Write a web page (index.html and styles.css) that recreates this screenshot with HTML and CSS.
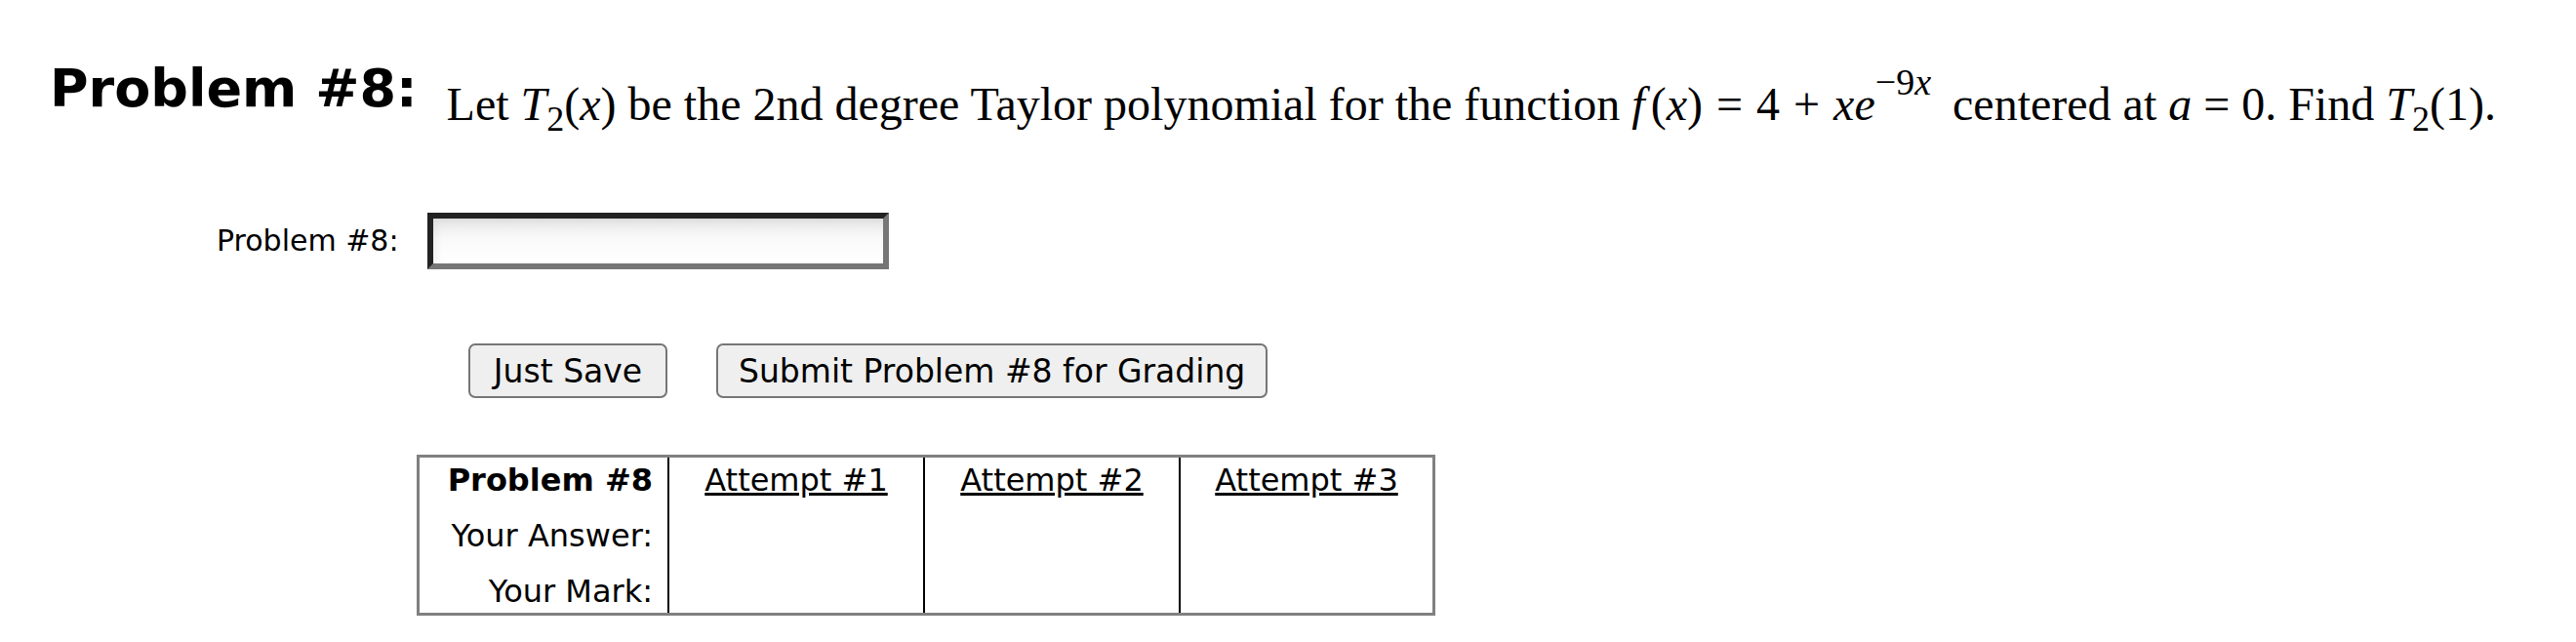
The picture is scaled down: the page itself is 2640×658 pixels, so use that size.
FILE: index.html
```
<!DOCTYPE html>
<html lang="en">
<head>
<meta charset="utf-8">
<title>Problem #8</title>
<link rel="stylesheet" href="styles.css">
</head>
<body>
<div class="page">
  <div class="problem-head">
    <h2 class="problem-title">Problem #8:</h2>
    <p class="problem-text">Let <i>T</i><sub class="sub">2</sub>(<i>x</i>) be the 2nd degree Taylor polynomial for the function <span class="math"><i class="fn">f</i>(<i>x</i>) <span class="op">=</span> 4 <span class="op">+</span> <i>xe</i><sup class="sup">−9<i>x</i></sup></span> centered at <i>a</i> = 0. Find <i>T</i><sub class="sub">2</sub>(1).</p>
  </div>

  <div class="answer-row">
    <label class="answer-label" for="ans8">Problem #8:</label>
    <input id="ans8" class="answer-input" type="text">
  </div>

  <div class="button-row">
    <button class="btn btn-save" type="button">Just Save</button>
    <button class="btn" type="button">Submit Problem #8 for Grading</button>
  </div>

  <table class="attempts">
    <tr class="row-head">
      <th class="cell-label">Problem #8</th>
      <td class="cell-att"><a href="#" class="att-link">Attempt #1</a></td>
      <td class="cell-att"><a href="#" class="att-link">Attempt #2</a></td>
      <td class="cell-att cell-last"><a href="#" class="att-link">Attempt #3</a></td>
    </tr>
    <tr class="row-mid">
      <td class="cell-label">Your Answer:</td>
      <td class="cell-att"></td>
      <td class="cell-att"></td>
      <td class="cell-att"></td>
    </tr>
    <tr class="row-last">
      <td class="cell-label">Your Mark:</td>
      <td class="cell-att"></td>
      <td class="cell-att"></td>
      <td class="cell-att"></td>
    </tr>
  </table>
</div>
</body>
</html>
```

FILE: styles.css
```
html, body {
  margin: 0;
  padding: 0;
  background: #ffffff;
  color: #000000;
}

.page {
  padding-top: 59px;
  font-family: "DejaVu Sans", Verdana, sans-serif;
}

/* ---------- problem statement ---------- */
.problem-head {
  display: flex;
  align-items: flex-start;
  padding-left: 51px;
  height: 78px;
}

.problem-title {
  margin: 0;
  font-family: "DejaVu Sans", Verdana, sans-serif;
  font-weight: bold;
  font-size: 54px;
  line-height: 64px;
  white-space: nowrap;
}

.problem-text {
  margin: 18px 0 0 30px;
  font-family: "Liberation Serif", "Times New Roman", serif;
  font-size: 48px;
  line-height: 60px;
  white-space: nowrap;
}

.problem-text i {
  font-style: italic;
}

.sub {
  font-size: 36px;
  vertical-align: -11px;
  line-height: 0;
}

.sup {
  font-size: 38px;
  vertical-align: 26px;
  line-height: 0;
  margin-right: 10px;
}

.fn {
  margin-right: 6px;
}

.op {
  margin: 0 2px;
}

/* ---------- answer input ---------- */
.answer-row {
  display: flex;
  align-items: center;
  margin-top: 81px;
  padding-left: 222px;
}

.answer-label {
  font-size: 30px;
  line-height: 36px;
  margin-right: 29px;
}

.answer-input {
  box-sizing: border-box;
  width: 473px;
  height: 58px;
  margin: 0;
  border: 6px solid;
  border-color: #222222 #767676 #767676 #222222;
  background: linear-gradient(#e6e6e6, #fafafa 45%, #ffffff);
  box-shadow: inset 4px 3px 8px rgba(0, 0, 0, 0.05);
  outline: none;
}

/* ---------- buttons ---------- */
.button-row {
  display: flex;
  gap: 50px;
  margin-top: 76px;
  padding-left: 480px;
}

.btn {
  box-sizing: border-box;
  height: 56px;
  margin: 0;
  padding: 0 21px;
  border: 2.5px solid #767676;
  border-radius: 7px;
  background: #efefef;
  color: #000000;
  font-family: "DejaVu Sans", Verdana, sans-serif;
  font-size: 33px;
  line-height: 1;
}

.btn-save {
  width: 204px;
  padding: 0;
}

/* ---------- attempts table ---------- */
.attempts {
  margin: 58px 0 0 427px;
  border: 3px solid #808080;
  border-spacing: 0;
  border-collapse: separate;
  table-layout: fixed;
  width: 1044px;
  font-family: "DejaVu Sans", Verdana, sans-serif;
  font-size: 32px;
  line-height: 40px;
}

.attempts th,
.attempts td {
  box-sizing: border-box;
  padding: 0;
  vertical-align: top;
  white-space: nowrap;
}

.cell-label {
  width: 254px;
  text-align: right;
  padding-right: 15px !important;
}

.row-head .cell-label {
  font-weight: bold;
}

.cell-att {
  width: 262px;
  text-align: center;
  border-left: 2.5px solid #000000;
}

.row-head .cell-last {
  width: 260px;
}

.row-head th,
.row-head td {
  padding-top: 3px;
  padding-bottom: 7px;
}

.row-mid td {
  padding-top: 10px;
  padding-bottom: 8px;
}

.row-last td {
  padding-top: 9px;
  padding-bottom: 2px;
}

.att-link {
  color: #000000;
  text-decoration: underline;
}
```
